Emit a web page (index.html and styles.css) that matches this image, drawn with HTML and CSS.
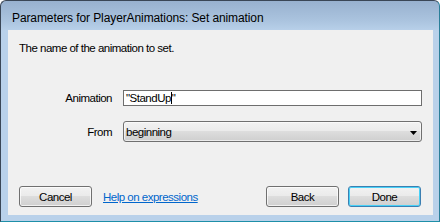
FILE: index.html
```html
<!DOCTYPE html>
<html>
<head>
<meta charset="utf-8">
<link rel="stylesheet" href="styles.css">
</head>
<body>
<div class="window">
  <div class="titlebar">Parameters for PlayerAnimations: Set animation</div>
  <div class="frame">
    <div class="client">
      <p class="desc">The name of the animation to set.</p>
      <div class="form">
        <label class="lbl lbl-input">Animation</label>
        <div class="input"><span>"StandUp</span><span class="caret"></span><span>"</span></div>
        <label class="lbl lbl-select">From</label>
        <div class="select"><span>beginning</span>
          <svg class="arrow" width="7" height="4" viewBox="0 0 7 4"><polygon points="0,0 7,0 3.5,4" fill="#000"/></svg>
        </div>
      </div>
      <div class="footer">
        <div class="btn">Cancel</div>
        <a class="link">Help on expressions</a>
        <div class="spacer"></div>
        <div class="btn">Back</div>
        <div class="btn btn-default">Done</div>
      </div>
    </div>
  </div>
</div>
</body>
</html>
```
FILE: styles.css
```css
* { box-sizing: border-box; }
html, body { margin: 0; padding: 0; background: #ffffff; }
body { font-family: "Liberation Sans", Arial, sans-serif; font-size: 11.5px; letter-spacing: -0.5px; color: #000; }

.window {
  width: 440px;
  height: 222px;
  display: flex;
  flex-direction: column;
  border: 1px solid #3a4656;
  border-bottom-color: #1e8fa8;
  border-right-color: #2a7f99;
  border-radius: 6px 6px 0 0;
  background: linear-gradient(to bottom, #98b1cf 0px, #abc4df 20px, #b9d1ea 30px, #b9d1ea 100%);
  overflow: hidden;
}

.titlebar {
  height: 29px;
  padding-left: 11px;
  padding-top: 9px;
  font-size: 12px;
  letter-spacing: -0.1px;
  line-height: 16px;
  color: #000;
  white-space: nowrap;
}

.frame {
  flex: 1;
  padding: 0 6px 6px 7px;
  display: flex;
}

.client {
  flex: 1;
  background: #f0f0f0;
  display: flex;
  flex-direction: column;
  padding: 0 12px 0 11px;
}

.desc {
  margin: 10px 0 0 0;
  line-height: 16px;
  height: 16px;
}

.form {
  margin-top: 34px;
  display: grid;
  grid-template-columns: 93px 1fr;
  column-gap: 11px;
  row-gap: 15px;
  align-items: center;
}

.lbl { text-align: right; line-height: 16px; }

.input {
  height: 16px;
  border: 1px solid #6e6e6e;
  background: #fff;
  padding-left: 2px;
  line-height: 14px;
  display: flex;
  align-items: center;
  margin-right: -1px;
}
.caret {
  display: inline-block;
  width: 1px;
  height: 12px;
  background: #000;
}

.select {
  position: relative;
  height: 21px;
  border: 1px solid #707070;
  border-radius: 3px;
  background: linear-gradient(to bottom, #f2f2f2 0%, #ebebeb 45%, #dddddd 50%, #cfcfcf 100%);
  box-shadow: inset 0 0 0 1px rgba(255,255,255,0.6);
  padding-left: 2px;
  display: flex;
  align-items: center;
  margin-right: -1px;
}
.arrow { position: absolute; right: 4px; top: 9px; }

.footer {
  margin-top: auto;
  margin-bottom: 8px;
  display: flex;
  align-items: center;
  height: 21px;
}
.spacer { flex: 1; }

.btn {
  width: 73px;
  height: 21px;
  border: 1px solid #707070;
  border-radius: 3px;
  background: linear-gradient(to bottom, #f2f2f2 0%, #ebebeb 45%, #dddddd 50%, #cfcfcf 100%);
  box-shadow: inset 0 0 0 1px rgba(255,255,255,0.7);
  display: flex;
  align-items: center;
  justify-content: center;
  line-height: 16px;
}
.btn + .btn { margin-left: 9px; }
.btn-default {
  border-color: #3c7fb1;
  box-shadow: inset 0 0 0 1px #48d1f7;
}

.link {
  margin-left: 11px;
  color: #0066cc;
  text-decoration: underline;
  line-height: 16px;
}
```
